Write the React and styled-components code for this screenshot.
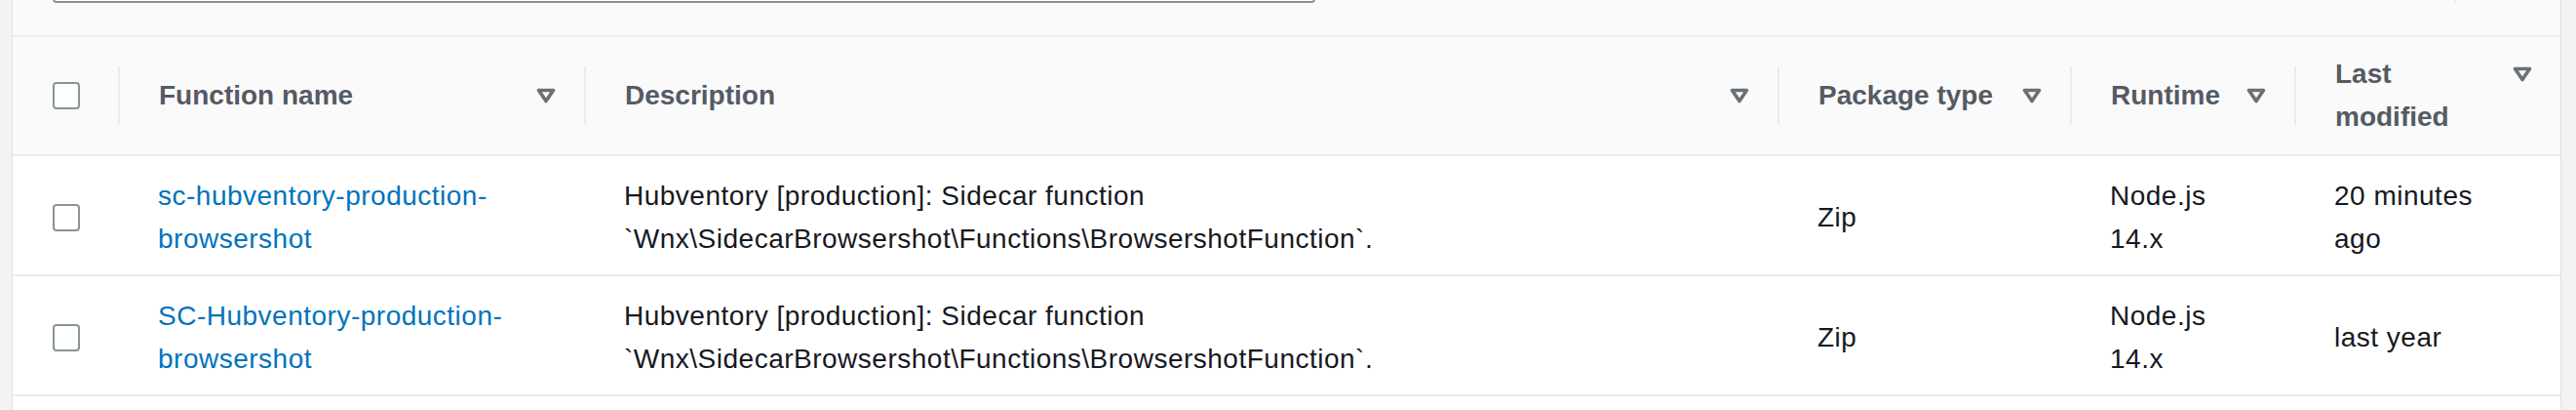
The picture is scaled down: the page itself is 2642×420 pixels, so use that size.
import React from "react";
import styled, { createGlobalStyle } from "styled-components";

const GlobalStyle = createGlobalStyle`
  html, body {
    margin: 0;
    padding: 0;
    background: #f2f3f3;
  }
  body {
    font-family: "Liberation Sans", Arial, sans-serif;
    -webkit-font-smoothing: antialiased;
  }
`;

const COLUMNS = "108px 478px 1224px 300px 230px 273px";

const Container = styled.div`
  margin: 0 15px 0 12px;
  min-height: 100vh;
  background: #ffffff;
  border-left: 1px solid #dfe3e3;
  border-right: 1px solid #dfe3e3;
`;

const Toolbar = styled.div`
  display: flex;
  align-items: flex-end;
  height: 38px;
  padding: 0 107px 33px 41px;
  box-sizing: border-box;
  overflow: hidden;
  background: #fafafa;
  border-bottom: 2px solid #eaeded;
`;

const SearchInput = styled.div`
  flex: 0 0 1295px;
  height: 64px;
  box-sizing: border-box;
  background: #ffffff;
  border: 2px solid #879596;
  border-radius: 4px;
`;

const Spacer = styled.div`
  flex: 1;
`;

const ToolbarSeparator = styled.div`
  width: 2px;
  height: 40px;
  background: #eaeded;
`;

const Row = styled.div`
  display: grid;
  grid-template-columns: ${COLUMNS};
  border-bottom: 2px solid #eaeded;
  background: ${(p) => (p.$head ? "#fafafa" : "#ffffff")};
  min-height: ${(p) => (p.$head ? "120px" : "121px")};
`;

const HeadCell = styled.div`
  display: flex;
  align-items: center;
  padding-left: ${(p) => (p.$first ? "41px" : "0")};
`;

const ColDivider = styled.div`
  width: 2px;
  height: 60px;
  flex: 0 0 2px;
  background: #eaeded;
`;

const HeadContent = styled.div`
  flex: 1;
  display: flex;
  justify-content: space-between;
  align-items: flex-start;
  gap: 16px;
  padding: 0 29px 0 40px;
`;

const HeadLabel = styled.div`
  flex: 0 1 auto;
  font-size: 28px;
  line-height: 44px;
  font-weight: 700;
  color: #545b64;
`;

const FilterIconBox = styled.div`
  flex: 0 0 20px;
  height: 44px;
  display: flex;
  align-items: center;
  justify-content: center;
`;

const Cell = styled.div`
  display: flex;
  align-items: center;
  padding: 19px ${(p) => (p.$check ? "0" : "48px")} 14px 41px;
  font-size: 28px;
  line-height: 44px;
  letter-spacing: 0.5px;
  color: #16191f;
`;

const NameLink = styled.a`
  color: #0073bb;
  text-decoration: none;
  cursor: pointer;
`;

const Checkbox = styled.span`
  display: inline-block;
  flex: 0 0 28px;
  width: 28px;
  height: 28px;
  box-sizing: border-box;
  border: 2px solid #879596;
  border-radius: 4px;
  background: #ffffff;
`;

function FilterIcon() {
  return (
    <svg width="20" height="16" viewBox="0 0 20 16">
      <polygon
        points="2.5,2.5 17.5,2.5 10,13.5"
        fill="none"
        stroke="#687078"
        strokeWidth="3.6"
        strokeLinejoin="round"
      />
    </svg>
  );
}

const headers = ["Function name", "Description", "Package type", "Runtime", "Last modified"];

const functions = [
  {
    name: "sc-hubventory-production-browsershot",
    description:
      "Hubventory [production]: Sidecar function `Wnx\\SidecarBrowsershot\\Functions\\BrowsershotFunction`.",
    packageType: "Zip",
    runtime: "Node.js 14.x",
    modified: "20 minutes ago",
  },
  {
    name: "SC-Hubventory-production-browsershot",
    description:
      "Hubventory [production]: Sidecar function `Wnx\\SidecarBrowsershot\\Functions\\BrowsershotFunction`.",
    packageType: "Zip",
    runtime: "Node.js 14.x",
    modified: "last year",
  },
];

export default function App() {
  return (
    <>
      <GlobalStyle />
      <Container>
        <Toolbar>
          <SearchInput />
          <Spacer />
          <ToolbarSeparator />
        </Toolbar>
        <Row $head>
          <HeadCell $first>
            <Checkbox />
          </HeadCell>
          {headers.map((label) => (
            <HeadCell key={label}>
              <ColDivider />
              <HeadContent>
                <HeadLabel>{label}</HeadLabel>
                <FilterIconBox>
                  <FilterIcon />
                </FilterIconBox>
              </HeadContent>
            </HeadCell>
          ))}
        </Row>
        {functions.map((fn) => (
          <Row key={fn.name}>
            <Cell $check>
              <Checkbox />
            </Cell>
            <Cell>
              <NameLink>{fn.name}</NameLink>
            </Cell>
            <Cell>{fn.description}</Cell>
            <Cell>{fn.packageType}</Cell>
            <Cell>{fn.runtime}</Cell>
            <Cell>{fn.modified}</Cell>
          </Row>
        ))}
      </Container>
    </>
  );
}
